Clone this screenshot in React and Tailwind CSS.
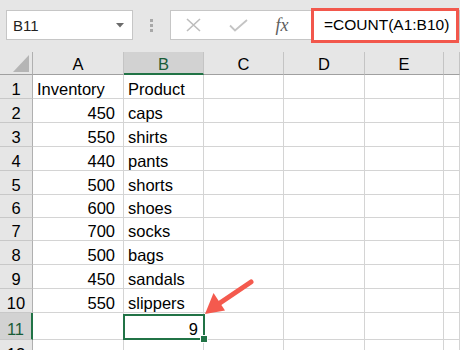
import React from 'react'

const rows = [
    { n: '1', a: 'Inventory', b: 'Product', h: 'h-[24px]', text: true },
    { n: '2', a: '450', b: 'caps', h: 'h-[24px]' },
    { n: '3', a: '550', b: 'shirts', h: 'h-[24px]' },
    { n: '4', a: '440', b: 'pants', h: 'h-[24px]' },
    { n: '5', a: '500', b: 'shorts', h: 'h-[24px]' },
    { n: '6', a: '600', b: 'shoes', h: 'h-[23px]' },
    { n: '7', a: '700', b: 'socks', h: 'h-[23px]' },
    { n: '8', a: '500', b: 'bags', h: 'h-[24px]' },
    { n: '9', a: '450', b: 'sandals', h: 'h-[24px]' },
    { n: '10', a: '550', b: 'slippers', h: 'h-[24px]' },
]

const cell = 'bg-white border-r border-b border-[#d4d4d4] flex items-end pb-[1px] leading-none'
const rowHead = 'w-[33px] shrink-0 bg-[#e6e6e6] border-r border-r-[#b0b0b0] border-b border-b-[#c8c8c8] flex items-end justify-center pb-[1px] leading-none'
const colHead = 'bg-[#e6e6e6] border-r border-r-[#c4c4c4] border-b border-b-[#a0a0a0] flex items-end justify-center pb-[2px] leading-none'

const App = () => {
    return (
        <div className="relative w-[460px] h-[350px] overflow-hidden bg-[#e6e6e6] font-['Liberation_Sans',Arial,sans-serif] text-black">
            {/* formula bar */}
            <div className="h-[52px] flex items-start pt-[10px] pl-[6px]">
                <div className="w-[127px] h-[30px] bg-white border border-[#c6c6c6] flex items-center justify-between pl-[6px] pr-[8px]">
                    <span className="text-[15px] leading-none text-[#222]">B11</span>
                    <svg width="8" height="5" viewBox="0 0 8 5"><path d="M0 0h8L4 4.5z" fill="#6b6b6b" /></svg>
                </div>
                <div className="w-[37px] h-[30px] flex flex-col items-center justify-center gap-[2px]">
                    <div className="w-[3px] h-[3px] bg-[#a8a8a8]" />
                    <div className="w-[3px] h-[3px] bg-[#a8a8a8]" />
                    <div className="w-[3px] h-[3px] bg-[#a8a8a8]" />
                </div>
                <div className="flex-1 h-[30px] bg-white border border-[#c6c6c6] flex items-center">
                    <div className="w-[44px] flex justify-center">
                        <svg width="15" height="14" viewBox="0 0 15 14"><path d="M1 1L14 13M14 1L1 13" stroke="#bdbdbd" strokeWidth="1.6" fill="none" /></svg>
                    </div>
                    <div className="w-[46px] flex justify-center">
                        <svg width="19" height="13" viewBox="0 0 19 13"><path d="M1 6.5L6 11.5L18 1" stroke="#c4c4c4" strokeWidth="1.8" fill="none" /></svg>
                    </div>
                    <div className="w-[42px] flex justify-center">
                        <span className="font-['Liberation_Serif',serif] italic text-[18px] leading-none text-[#5e5e5e]">fx</span>
                    </div>
                    <div className="w-[8px]" />
                    <div className="flex-1 h-[35px] bg-white border-[3px] border-[#f2574c] flex items-center pl-[10px]">
                        <span className="text-[15.5px] leading-none">=COUNT(A1:B10)</span>
                    </div>
                </div>
            </div>

            {/* grid */}
            <div className="text-[16.5px]">
                <div className="flex h-[23px]">
                    <div className="relative w-[33px] shrink-0 bg-[#e6e6e6] border-r border-r-[#b0b0b0] border-b border-b-[#a0a0a0]">
                        <svg className="absolute right-[3px] bottom-[2px]" width="16" height="17" viewBox="0 0 16 17"><path d="M16 0V17H0z" fill="#b5b5b5" /></svg>
                    </div>
                    <div className={`w-[91px] ${colHead}`}>A</div>
                    <div className="w-[80px] bg-[#d2d2d2] border-r border-r-[#c4c4c4] border-b-2 border-b-[#217346] flex items-end justify-center pb-[1px] leading-none text-[#185c37]">B</div>
                    <div className={`w-[80px] ${colHead}`}>C</div>
                    <div className={`w-[81px] ${colHead}`}>D</div>
                    <div className={`w-[79px] ${colHead}`}>E</div>
                    <div className={`flex-1 ${colHead}`}></div>
                </div>

                {rows.map((r) => (
                    <div key={r.n} className={`flex ${r.h}`}>
                        <div className={rowHead}>{r.n}</div>
                        <div className={`w-[91px] ${cell} ${r.text ? 'pl-[4px]' : 'justify-end pr-[8px]'}`}>{r.a}</div>
                        <div className={`w-[80px] ${cell} pl-[4px]`}>{r.b}</div>
                        <div className={`w-[80px] ${cell}`}></div>
                        <div className={`w-[81px] ${cell}`}></div>
                        <div className={`w-[79px] ${cell}`}></div>
                        <div className={`flex-1 ${cell}`}></div>
                    </div>
                ))}

                <div className="flex h-[27px]">
                    <div className="w-[33px] shrink-0 bg-[#d2d2d2] border-r-2 border-r-[#217346] border-b border-b-[#c8c8c8] flex items-end justify-center pb-[2px] leading-none text-[#185c37]">11</div>
                    <div className={`w-[91px] ${cell}`}></div>
                    <div className={`relative w-[80px] ${cell} justify-end pr-[5px] pb-[2px]`}>
                        9
                        <div className="absolute -left-[1px] top-[1px] -right-[2px] -bottom-[1px] border-2 border-[#217346]" />
                        <div className="absolute -right-[5px] -bottom-[4px] w-[8px] h-[8px] bg-[#217346] border border-white" />
                    </div>
                    <div className={`w-[80px] ${cell}`}></div>
                    <div className={`w-[81px] ${cell}`}></div>
                    <div className={`w-[79px] ${cell}`}></div>
                    <div className={`flex-1 ${cell}`}></div>
                </div>

                <div className="flex h-[24px]">
                    <div className={rowHead}>12</div>
                    <div className={`w-[91px] ${cell}`}></div>
                    <div className={`w-[80px] ${cell}`}></div>
                    <div className={`w-[80px] ${cell}`}></div>
                    <div className={`w-[81px] ${cell}`}></div>
                    <div className={`w-[79px] ${cell}`}></div>
                    <div className={`flex-1 ${cell}`}></div>
                </div>
            </div>

            {/* callout arrow */}
            <svg className="absolute left-0 top-0 pointer-events-none" width="460" height="350" viewBox="0 0 460 350">
                <line x1="251" y1="282" x2="214" y2="307" stroke="#f45a4e" strokeWidth="5" strokeLinecap="round" />
                <path d="M205 314L213.5 293L225 310.5z" fill="#f45a4e" />
            </svg>
        </div>
    )
}

export default App
